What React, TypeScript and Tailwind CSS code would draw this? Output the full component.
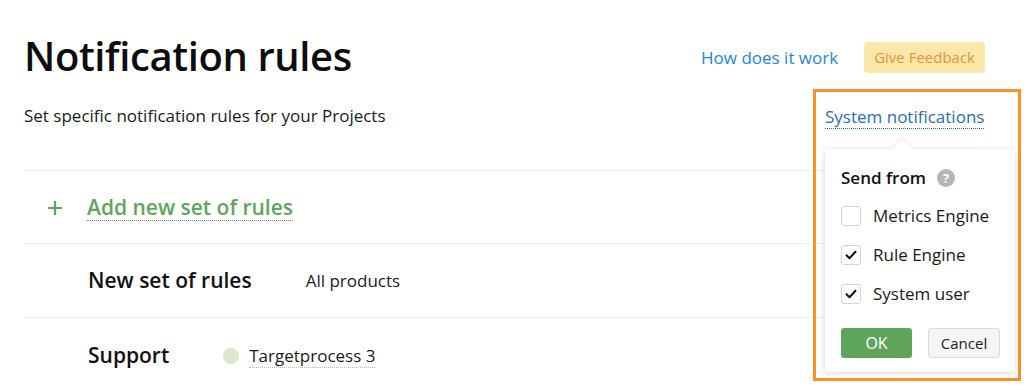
import React from "react";

const font = { fontFamily: '"Open Sans", "Noto Sans", sans-serif' };

function Check({ checked }: { checked: boolean }) {
  return (
    <span className="flex h-[20px] w-[20px] items-center justify-center rounded-[3px] border border-[#d4d4d4] bg-white">
      {checked && (
        <svg width="12" height="10" viewBox="0 0 12 10" fill="none">
          <path d="M1.5 5.2 L4.5 8.2 L10.5 1.8" stroke="#111" strokeWidth="2" strokeLinecap="round" strokeLinejoin="round" />
        </svg>
      )}
    </span>
  );
}

export default function App() {
  return (
    <div className="relative h-[385px] w-[1024px] overflow-hidden bg-white text-[#111]" style={font}>
      <div className="px-6 pt-[32px]">
        <div className="flex h-[48px] items-center justify-between">
          <h1 className="text-[40px] font-semibold leading-[48px] tracking-[-0.4px] text-[#0d0d0d]">Notification rules</h1>
          <div className="mt-[3px] flex items-center gap-[26px] pr-[15px]">
            <span className="text-[17px] leading-[24px] text-[#1c86e0]">How does it work</span>
            <span className="flex h-[31px] items-center rounded-[4px] bg-[#fbe7a9] px-[10px] text-[15px] text-[#e3953a]">Give Feedback</span>
          </div>
        </div>
        <p className="mt-[24px] text-[17px] leading-[24px] text-[#1a1a1a]">Set specific notification rules for your Projects</p>

        <div className="mt-[42px]">
          <div className="flex h-[73px] items-center border-t border-[#ededed] pt-[1px]">
            <span className="ml-[23px] w-[16px]">
              <svg width="16" height="16" viewBox="0 0 16 16">
                <path d="M8 1 V15 M1 8 H15" stroke="#5ea65b" strokeWidth="2.2" />
              </svg>
            </span>
            <span className="ml-[24px] border-b border-dotted border-[#5ea65b] text-[21px] font-semibold leading-[26px] text-[#5ea65b]">Add new set of rules</span>
          </div>
          <div className="flex h-[74px] items-center gap-[54px] border-t border-[#ededed] pl-[64px] pt-[1px]">
            <span className="text-[21px] font-semibold text-[#111]">New set of rules</span>
            <span className="text-[17px] text-[#1a1a1a]">All products</span>
          </div>
          <div className="flex h-[76px] items-center gap-[54px] border-t border-[#ededed] pl-[64px] pt-[1px]">
            <span className="text-[21px] font-semibold text-[#111]">Support</span>
            <span className="flex items-center gap-[10px]">
              <span className="h-[16px] w-[16px] rounded-full bg-[#dde8cb]" />
              <span className="border-b border-dotted border-[#bbbbbb] text-[17px] leading-[22px] text-[#1a1a1a]">Targetprocess 3</span>
            </span>
          </div>
        </div>
      </div>

      <div className="absolute left-[813px] top-[89px] h-[292px] w-[208px] border-[3px] border-[#f7922a]">
        <div className="pl-[9px] pt-[13px]">
          <span className="border-b border-dotted border-[#2a6cb6] text-[17px] leading-[24px] text-[#2a6cb6]">System notifications</span>
        </div>
        <div className="relative ml-[9px] mt-[20px] w-[190px] rounded-[2px] bg-white pb-[14px] pl-[16px] pr-[14px] pt-[18px] shadow-[0_1px_6px_rgba(0,0,0,0.16)]">
          <span className="absolute left-[70px] top-[-7px] h-[14px] w-[14px] rotate-45 bg-white shadow-[-2px_-2px_3px_rgba(0,0,0,0.06)]" />
          <div className="flex items-center gap-[11px]">
            <span className="text-[17px] font-semibold leading-[22px] text-[#111]">Send from</span>
            <span className="flex h-[18px] w-[18px] items-center justify-center rounded-full bg-[#b5b5b5] text-[13px] font-bold leading-none text-white">?</span>
          </div>
          <div className="mt-[17px] flex flex-col gap-[19px]">
            {[
              ["Metrics Engine", false],
              ["Rule Engine", true],
              ["System user", true],
            ].map(([label, c]) => (
              <div key={label as string} className="flex h-[20px] items-center gap-[12px]">
                <Check checked={c as boolean} />
                <span className="text-[17px] text-[#1a1a1a]">{label as string}</span>
              </div>
            ))}
          </div>
          <div className="mt-[24px] flex items-center gap-[16px]">
            <span className="flex h-[30px] w-[71px] items-center justify-center rounded-[3px] bg-[#5ea55b] text-[16px] text-white">OK</span>
            <span className="flex h-[30px] w-[72px] items-center justify-center rounded-[3px] border border-[#dcdcdc] bg-[#f5f5f5] text-[15px] text-[#222]">Cancel</span>
          </div>
        </div>
      </div>
    </div>
  );
}
